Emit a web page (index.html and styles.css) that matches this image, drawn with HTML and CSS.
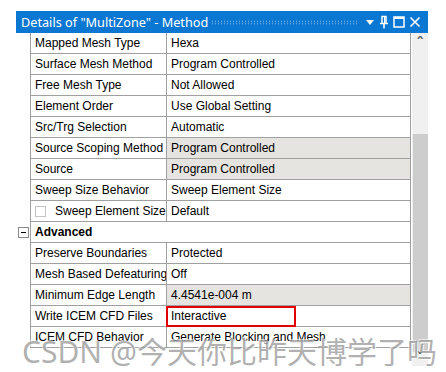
FILE: index.html
```html
<!DOCTYPE html>
<html>
<head lang="en">
    <meta charset="UTF-8">
    <title>Details of MultiZone</title>
    <link rel="stylesheet" href="styles.css">
</head>
<body>
<div id="panel">
    <div id="titlebar">
        <span class="title">Details of "MultiZone" - Method</span>
        <span class="grip"></span>
        <svg class="tb-icon" width="10" height="12" viewBox="0 0 10 12"><path d="M1 4h8l-4 5z" fill="#fff"/></svg>
        <svg class="tb-icon" width="10" height="14" viewBox="0 0 10 14"><path d="M1 8.5h8M3 1.5h4v7H3zM5 8.5v5" stroke="#fff" stroke-width="1.5" fill="none"/><path d="M5.5 2v6" stroke="#fff" stroke-width="1"/></svg>
        <svg class="tb-icon" width="12" height="14" viewBox="0 0 12 14"><rect x="1" y="2" width="10" height="10" stroke="#fff" stroke-width="1.5" fill="none"/><path d="M1 3h10" stroke="#fff" stroke-width="2"/></svg>
        <svg class="tb-icon" width="12" height="14" viewBox="0 0 12 14"><path d="M1.5 2.5l9 9M10.5 2.5l-9 9" stroke="#fff" stroke-width="1.6"/></svg>
    </div>
    <div id="main">
        <div id="grid">
            <div class="row"><span class="gutter"></span><span class="label">Mapped Mesh Type</span><span class="value">Hexa</span></div>
            <div class="row"><span class="gutter"></span><span class="label">Surface Mesh Method</span><span class="value">Program Controlled</span></div>
            <div class="row"><span class="gutter"></span><span class="label">Free Mesh Type</span><span class="value">Not Allowed</span></div>
            <div class="row"><span class="gutter"></span><span class="label">Element Order</span><span class="value">Use Global Setting</span></div>
            <div class="row"><span class="gutter"></span><span class="label">Src/Trg Selection</span><span class="value">Automatic</span></div>
            <div class="row"><span class="gutter"></span><span class="label">Source Scoping Method</span><span class="value grey">Program Controlled</span></div>
            <div class="row"><span class="gutter"></span><span class="label">Source</span><span class="value grey">Program Controlled</span></div>
            <div class="row"><span class="gutter"></span><span class="label">Sweep Size Behavior</span><span class="value">Sweep Element Size</span></div>
            <div class="row"><span class="gutter"></span><span class="label"><span class="check"></span>Sweep Element Size</span><span class="value">Default</span></div>
            <div class="row"><span class="gutter"><span class="expander"></span></span><span class="label group">Advanced</span></div>
            <div class="row"><span class="gutter"></span><span class="label">Preserve Boundaries</span><span class="value">Protected</span></div>
            <div class="row"><span class="gutter"></span><span class="label">Mesh Based Defeaturing</span><span class="value">Off</span></div>
            <div class="row"><span class="gutter"></span><span class="label">Minimum Edge Length</span><span class="value grey">4.4541e-004 m</span></div>
            <div class="row"><span class="gutter"></span><span class="label">Write ICEM CFD Files</span><span class="value">Interactive<span class="mark"></span></span></div>
            <div class="row"><span class="gutter"></span><span class="label">ICEM CFD Behavior</span><span class="value">Generate Blocking and Mesh</span></div>
        </div>
        <div id="scrollbar">
            <span class="arrow">&#710;</span>
            <span class="thumb"></span>
            <span class="arrow down">&#711;</span>
        </div>
    </div>
    <div class="watermark">CSDN @今天你比昨天博学了吗</div>
</div>
</body>
</html>
```

FILE: styles.css
```css
*{
    margin: 0;
    padding: 0;
    box-sizing: border-box;
}
body{
    background: #fff;
    font-family: "Liberation Sans", Arial, sans-serif;
    font-size: 12px;
    color: #000;
}
#panel{
    position: relative;
    width: 412px;
    margin: 11px 0 0 16px;
}
#titlebar{
    height: 22px;
    background: #0a78d2;
    color: #fff;
    display: flex;
    align-items: center;
    padding: 0 7px 0 5px;
}
#titlebar .title{
    font-family: "Noto Sans", sans-serif;
    font-size: 12.7px;
    white-space: nowrap;
}
#titlebar .grip{
    flex: 1;
    height: 5px;
    margin: 0 4px 0 3px;
    background-image: radial-gradient(circle, rgba(255,255,255,.45) 0.6px, transparent 0.9px);
    background-size: 3px 2.5px;
}
.tb-icon{
    margin-left: 4px;
    display: block;
}
#main{
    display: flex;
    align-items: flex-start;
}
#grid{
    width: 395px;
}
.row{
    display: grid;
    grid-template-columns: 14px 137px 244px;
    height: 21px;
}
.gutter{
    display: flex;
    align-items: center;
    padding-left: 2px;
}
.expander{
    width: 11px;
    height: 11px;
    border: 1px solid #8a8a8a;
    position: relative;
}
.expander::after{
    content: "";
    position: absolute;
    left: 2px;
    top: 4px;
    width: 5px;
    height: 1px;
    background: #000;
}
.label, .value{
    display: flex;
    align-items: center;
    padding-left: 4px;
    border-bottom: 1px solid #a0a0a0;
    white-space: nowrap;
    overflow: hidden;
}
.label{
    border-left: 1px solid #a0a0a0;
    border-right: 1px solid #a0a0a0;
}
.value{
    border-right: 1px solid #a0a0a0;
    position: relative;
    overflow: visible;
}
.value.grey{
    background: #e6e4e1;
}
.label.group{
    grid-column: 2 / 4;
    border-right: 1px solid #a0a0a0;
    font-weight: bold;
}
.check{
    width: 11px;
    height: 11px;
    border: 1px solid #c4c4c4;
    margin-right: 9px;
}
.mark{
    position: absolute;
    left: -1px;
    top: 0;
    width: 130px;
    height: 21px;
    border: 2px solid #e00000;
}
#scrollbar{
    width: 16px;
    height: 333px;
    margin-left: 1px;
    background: #f0f0f0;
    display: flex;
    flex-direction: column;
    align-items: center;
}
#scrollbar .arrow{
    height: 18px;
    line-height: 22px;
    font-size: 16px;
    font-weight: bold;
    color: #606060;
}
#scrollbar .thumb{
    width: 15px;
    height: 218px;
    margin-top: 83px;
    background: #cdcdcd;
}
#scrollbar .arrow.down{
    height: 14px;
    line-height: 14px;
}
.watermark{
    position: absolute;
    left: 6px;
    top: 317px;
    font-size: 30px;
    color: rgba(110,110,110,.55);
    text-shadow: 1px 1px 0 rgba(255,255,255,.8), -1px -1px 0 rgba(255,255,255,.6);
    white-space: nowrap;
    font-family: "Noto Sans", "Noto Sans CJK SC", sans-serif;
}
```
